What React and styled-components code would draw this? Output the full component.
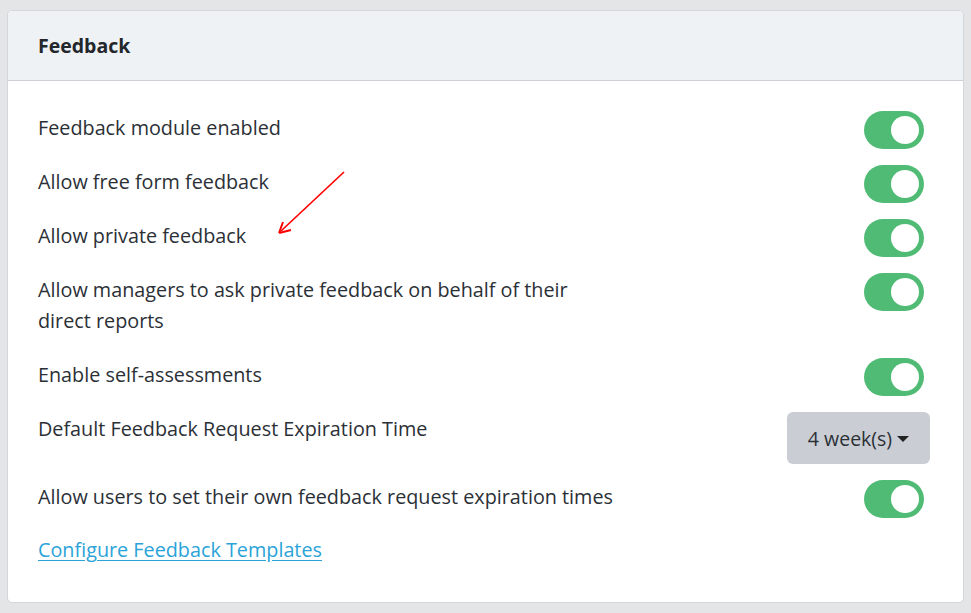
import React, { useState } from "react";
import styled, { createGlobalStyle } from "styled-components";

const GlobalStyle = createGlobalStyle`
    html, body {
        margin: 0;
        background: #e4e5e7;
    }
    body {
        padding: 10px 7px 10px 7px;
        font-family: "Open Sans", "Noto Sans", sans-serif;
        color: #2b3036;
    }
    * { box-sizing: border-box; }
`;

const Card = styled.div`
    position: relative;
    background: #fff;
    border: 1px solid #d3d6da;
    border-radius: 5px;
    overflow: hidden;
`;

const Header = styled.div`
    height: 70px;
    display: flex;
    align-items: center;
    padding-left: 30px;
    background: #eff2f5;
    border-bottom: 1px solid #cdd1d6;
    h1 {
        margin: 0;
        font-size: 19.5px;
        font-weight: 700;
        color: #23272c;
    }
`;

const Body = styled.div`
    padding: 30px 33px 37px 30px;
    display: flex;
    flex-direction: column;
    gap: 16px;
`;

const Row = styled.div`
    display: flex;
    justify-content: space-between;
    align-items: flex-start;
    min-height: 38px;
`;

const Label = styled.div`
    max-width: 580px;
    font-size: 19.8px;
    line-height: 31px;
    padding-top: 1px;
    padding-bottom: ${(p) => (p.$wrap ? "6px" : "0")};
`;

const Switch = styled.button`
    position: relative;
    width: 60px;
    height: 38px;
    margin-right: 6px;
    border: none;
    border-radius: 19px;
    padding: 0;
    background: ${(p) => (p.$on ? "#50bb74" : "#c9cdd2")};
    cursor: pointer;
    flex-shrink: 0;
    &::after {
        content: "";
        position: absolute;
        top: 5px;
        left: ${(p) => (p.$on ? "27px" : "5px")};
        width: 28px;
        height: 28px;
        border-radius: 50%;
        background: #fff;
        transition: left 0.2s ease;
    }
`;

const Dropdown = styled.button`
    height: 52px;
    width: 143px;
    border: none;
    border-radius: 6px;
    background: #caced4;
    color: #2b3036;
    font-family: inherit;
    font-size: 19.5px;
    display: flex;
    align-items: center;
    justify-content: center;
    gap: 5px;
    cursor: pointer;
    span.caret {
        width: 0;
        height: 0;
        border-left: 6px solid transparent;
        border-right: 6px solid transparent;
        border-top: 6px solid #222;
        margin-top: 1px;
    }
`;

const Link = styled.a`
    align-self: flex-start;
    font-size: 19.8px;
    line-height: 31px;
    color: #2ba3d8;
    text-decoration: underline;
    text-underline-offset: 3px;
    cursor: pointer;
`;

const Arrow = styled.svg`
    position: absolute;
    left: 263px;
    top: 158px;
`;

const settings = [
    { key: "module", label: "Feedback module enabled" },
    { key: "freeform", label: "Allow free form feedback" },
    { key: "private", label: "Allow private feedback" },
    { key: "managers", label: "Allow managers to ask private feedback on behalf of their direct reports", wrap: true },
    { key: "self", label: "Enable self-assessments" },
];

function App() {
    const [on, setOn] = useState({ module: true, freeform: true, private: true, managers: true, self: true, own: true });
    const flip = (k) => setOn({ ...on, [k]: !on[k] });
    return (
        <>
            <GlobalStyle />
            <Card>
                <Header><h1>Feedback</h1></Header>
                <Body>
                    {settings.map((s) => (
                        <Row key={s.key}>
                            <Label $wrap={s.wrap}>{s.label}</Label>
                            <Switch $on={on[s.key]} onClick={() => flip(s.key)} />
                        </Row>
                    ))}
                    <Row>
                        <Label>Default Feedback Request Expiration Time</Label>
                        <Dropdown>4 week(s)<span className="caret" /></Dropdown>
                    </Row>
                    <Row>
                        <Label>Allow users to set their own feedback request expiration times</Label>
                        <Switch $on={on.own} onClick={() => flip("own")} />
                    </Row>
                    <Link>Configure Feedback Templates</Link>
                </Body>
                {/* red annotation arrow */}
                <Arrow width="80" height="70" viewBox="0 0 80 70">
                    <path d="M73 3 L10 62" stroke="#f00" strokeWidth="1.7" fill="none" />
                    <path d="M8 64 L12 53 M8 64 L20 61" stroke="#f00" strokeWidth="2" fill="none" />
                </Arrow>
            </Card>
        </>
    );
}

export default App;
